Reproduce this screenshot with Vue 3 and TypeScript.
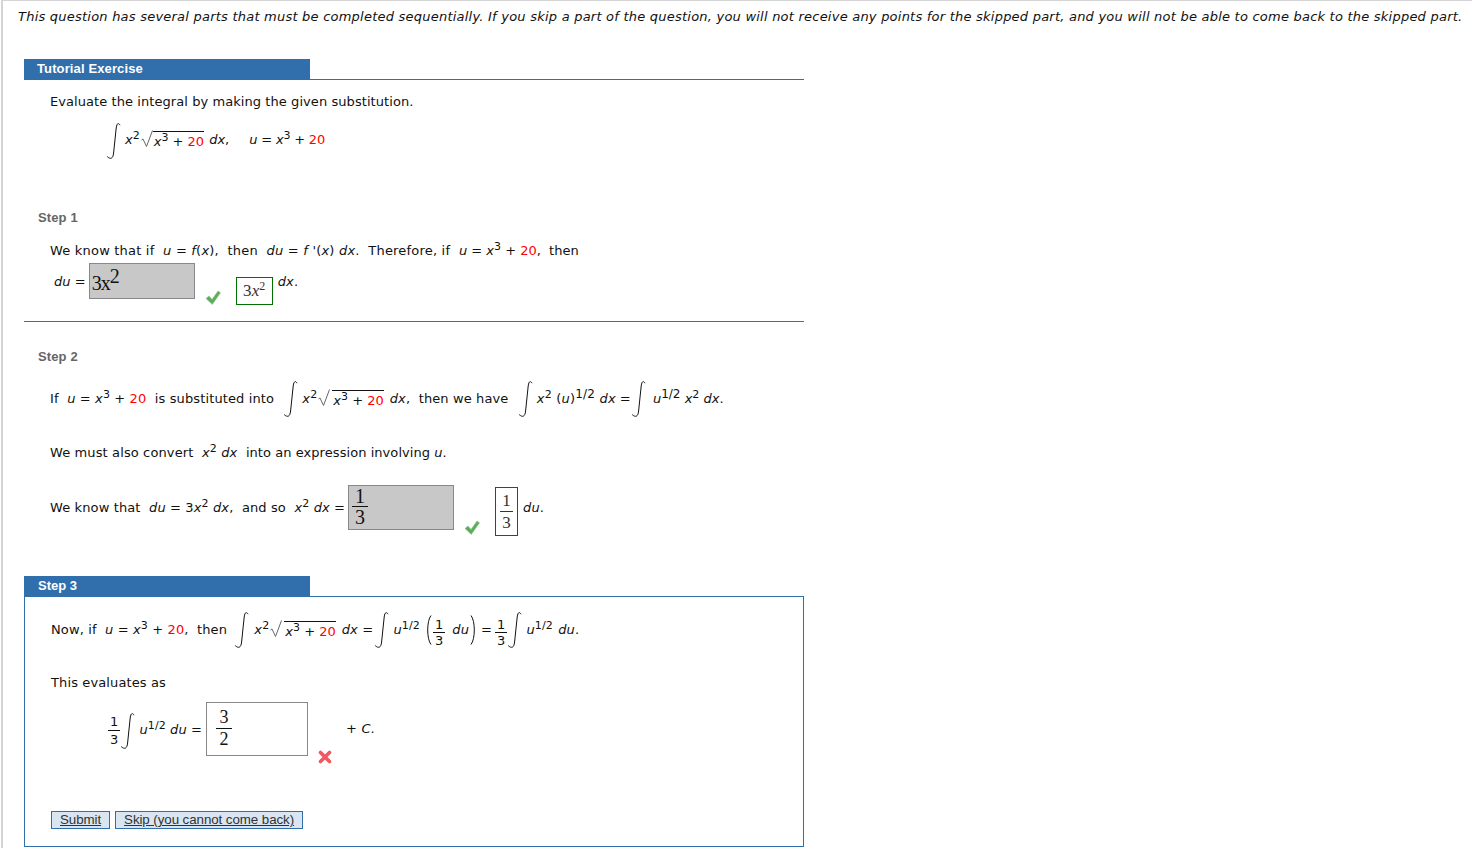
<script setup lang="ts">
const note =
  'This question has several parts that must be completed sequentially. If you skip a part of the question, you will not receive any points for the skipped part, and you will not be able to come back to the skipped part.'
</script>

<template>
  <div class="page">
    <p class="note">{{ note }}</p>

    <section class="tutorial">
      <div class="bar-row"><h2 class="bar">Tutorial Exercise</h2></div>
      <p class="line intro">Evaluate the integral by making the given substitution.</p>
      <div class="line math problem">
        <svg class="int" viewBox="0 0 15 38"><path d="M14 3.2C12.6 .6 10.8 1 10.2 6L7.6 31C7 36.8 4.6 37.6 1.2 34.6" /></svg>
        <i class="v first">x</i><sup>2</sup><svg class="rad" viewBox="0 0 12 17"><path d="M.5 10L2 9 5.5 16.5 11.5 .5" /></svg><span class="radicand"><i class="v">x</i><sup>3</sup> + <b class="red">20</b></span>
        <i class="v gap-s">dx</i>,
        <span class="given"><i class="v gap-l">u</i> = <i class="v">x</i><sup>3</sup> + <b class="red">20</b></span>
      </div>

      <h3 class="step s1">Step 1</h3>
      <p class="line know">
        We know that if&nbsp; <i class="v">u</i> = <i class="v">f</i>(<i class="v">x</i>),&nbsp; then&nbsp;
        <i class="v">du</i> = <i class="v">f</i> '(<i class="v">x</i>) <i class="v">dx</i>.&nbsp; Therefore, if&nbsp;
        <span class="tail"><i class="v">u</i> = <i class="v">x</i><sup>3</sup> + <b class="red">20</b>,&nbsp; then</span>
      </p>
      <div class="answer-row first-answer">
        <i class="v du">du</i><span class="eq">=</span>
        <div class="field filled wide-a"><span class="typed">3x<sup class="big-sup">2</sup></span></div>
        <svg class="mark check" viewBox="0 0 16 15"><path d="M1 8.5L4 6l3 3.4L13 1l2.5 1.8L7.3 14.4z" /></svg>
        <div class="solution s-a"><span class="tex">3<i>x</i><sup>2</sup></span></div>
        <span class="after-a"><i class="v">dx</i>.</span>
      </div>
      <hr class="rule" />

      <h3 class="step s2">Step 2</h3>
      <div class="line math sub-line">
        If&nbsp; <i class="v">u</i> = <i class="v">x</i><sup>3</sup> + <b class="red">20</b>&nbsp; is substituted into
        <svg class="int sp-int" viewBox="0 0 15 38"><path d="M14 3.2C12.6 .6 10.8 1 10.2 6L7.6 31C7 36.8 4.6 37.6 1.2 34.6" /></svg>
        <i class="v first">x</i><sup>2</sup><svg class="rad" viewBox="0 0 12 17"><path d="M.5 10L2 9 5.5 16.5 11.5 .5" /></svg><span class="radicand wide"><i class="v">x</i><sup>3</sup> + <b class="red">20</b></span>
        <i class="v gap-s">dx</i>,&nbsp; then we have
        <svg class="int sp-int" viewBox="0 0 15 38"><path d="M14 3.2C12.6 .6 10.8 1 10.2 6L7.6 31C7 36.8 4.6 37.6 1.2 34.6" /></svg>
        <span class="mid"><i class="v first">x</i><sup>2</sup> (<i class="v">u</i>)<sup class="large">1/2</sup> <i class="v">dx</i><span class="tight-eq">=</span></span>
        <svg class="int" viewBox="0 0 15 38"><path d="M14 3.2C12.6 .6 10.8 1 10.2 6L7.6 31C7 36.8 4.6 37.6 1.2 34.6" /></svg>
        <span class="tail"><i class="v after-int">u</i><sup class="large">1/2</sup> <i class="v">x</i><sup>2</sup> <i class="v">dx</i>.</span>
      </div>
      <p class="line convert">
        We must also convert&nbsp; <i class="v">x</i><sup>2</sup> <i class="v">dx</i>&nbsp; <span class="snug">into an expression involving <i class="v">u</i>.</span>
      </p>
      <div class="answer-row second-answer">
        <span class="lead">We know that&nbsp; <i class="v">du</i> = 3<i class="v">x</i><sup>2</sup> <i class="v">dx</i>,&nbsp; and so&nbsp; <i class="v">x</i><sup>2</sup> <i class="v">dx</i> =</span>
        <div class="field filled wide-b">
          <span class="frac-lg"><span>1</span><span>3</span></span>
        </div>
        <svg class="mark check" viewBox="0 0 16 15"><path d="M1 8.5L4 6l3 3.4L13 1l2.5 1.8L7.3 14.4z" /></svg>
        <div class="solution s-b"><span class="frac-tex"><span>1</span><span>3</span></span></div>
        <span class="after-b"><i class="v">du</i>.</span>
      </div>
    </section>

    <section class="active">
      <div class="bar-row"><h2 class="bar step-bar">Step 3</h2></div>
      <div class="panel">
        <div class="line math now">
          Now, if&nbsp; <i class="v">u</i> = <i class="v">x</i><sup>3</sup> + <b class="red">20</b>,&nbsp; then
          <svg class="int now-int" viewBox="0 0 15 38"><path d="M14 3.2C12.6 .6 10.8 1 10.2 6L7.6 31C7 36.8 4.6 37.6 1.2 34.6" /></svg>
          <i class="v now-first">x</i><sup>2</sup><svg class="rad" viewBox="0 0 12 17"><path d="M.5 10L2 9 5.5 16.5 11.5 .5" /></svg><span class="radicand wide"><i class="v">x</i><sup>3</sup> + <b class="red">20</b></span>
          <i class="v gap-s">dx</i> =
          <svg class="int pull" viewBox="0 0 15 38"><path d="M14 3.2C12.6 .6 10.8 1 10.2 6L7.6 31C7 36.8 4.6 37.6 1.2 34.6" /></svg>
          <i class="v first">u</i><sup>1/2</sup>
          <svg class="paren open-paren" viewBox="0 0 7 30"><path d="M6 .5C1.6 6 1.6 24 6 29.5" /></svg><span class="frac"><span>1</span><span>3</span></span>
          <i class="v du-inline">du</i><svg class="paren" viewBox="0 0 7 30"><path d="M1 .5C5.4 6 5.4 24 1 29.5" /></svg><span class="eq-near">=</span>
          <span class="frac near"><span>1</span><span>3</span></span><svg class="int tight" viewBox="0 0 15 38"><path d="M14 3.2C12.6 .6 10.8 1 10.2 6L7.6 31C7 36.8 4.6 37.6 1.2 34.6" /></svg>
          <i class="v first">u</i><sup>1/2</sup> <i class="v last-du">du</i>.
        </div>
        <p class="line evaluates">This evaluates as</p>
        <div class="answer-row third-answer">
          <span class="frac"><span>1</span><span>3</span></span><svg class="int tight" viewBox="0 0 15 38"><path d="M14 3.2C12.6 .6 10.8 1 10.2 6L7.6 31C7 36.8 4.6 37.6 1.2 34.6" /></svg>
          <span class="integrand"><i class="v">u</i><sup>1/2</sup> <i class="v">du</i> =</span>
          <div class="field open"><span class="frac-lg open-frac"><span>3</span><span>2</span></span></div>
          <svg class="mark cross" viewBox="0 0 14 14"><path d="M2.5 2.5l9 9M11.5 2.5l-9 9" /></svg>
          <span class="plus-c">+ <i class="v">C</i>.</span>
        </div>
        <div class="actions">
          <button class="btn" type="button">Submit</button>
          <button class="btn" type="button">Skip (you cannot come back)</button>
        </div>
      </div>
    </section>
  </div>
</template>

<style>
html,
body {
  margin: 0;
  background: #fff;
}
</style>

<style scoped>
.page {
  box-sizing: border-box;
  height: 848px;
  margin-left: 1px;
  border-top: 1px solid #d4d4d4;
  border-left: 2px solid #d4d4d4;
  padding-left: 21px;
  overflow: hidden;
  color: #111;
  font: 13px/16px "DejaVu Sans", Verdana, sans-serif;
  letter-spacing: 0.12px;
}
p,
h2,
h3 {
  margin: 0;
}
.note {
  width: 1460px;
  margin-top: 8px;
  margin-left: -6px;
  font-style: italic;
  letter-spacing: 0.226px;
  white-space: nowrap;
}
.tutorial {
  width: 780px;
  margin-top: 34px;
}
.bar-row {
  height: 20px;
  border-bottom: 1px solid #306fac;
}
.bar {
  box-sizing: border-box;
  width: 286px;
  height: 20px;
  padding-left: 13px;
  background: #306fac;
  color: #fff;
  font: bold 13px/19px "Liberation Sans", Arial, sans-serif;
  letter-spacing: 0.12px;
}
.step-bar {
  padding-left: 14px;
  letter-spacing: 0;
}
.line {
  margin-left: 26px;
  white-space: nowrap;
}
.math {
  height: 38px;
  line-height: 38px;
}
.intro {
  margin-top: 14px;
  letter-spacing: 0.07px;
}
.problem {
  margin-top: 12px;
  margin-left: 82px;
  line-height: 33px;
  letter-spacing: 0;
}
.problem .int {
  vertical-align: -16px;
}
.problem .radicand {
  margin-right: -1px;
}
.given {
  letter-spacing: -0.2px;
}
.v {
  font-style: italic;
}
.first {
  margin-left: 4px;
}
.after-int {
  margin-left: 7px;
}
.now-first {
  margin-left: 5px;
}
sup {
  font-size: 11px;
  line-height: 0;
  vertical-align: 5px;
}
sup.large {
  font-size: 12px;
}
.red {
  color: #f00;
  font-weight: normal;
}
.int {
  width: 15px;
  height: 38px;
  vertical-align: -15px;
  fill: none;
  stroke: #111;
  stroke-width: 1;
}
.sp-int {
  margin-left: 5px;
}
.now-int {
  margin-left: 3px;
}
.pull {
  margin-left: -3px;
}
.tight {
  margin-left: 0;
}
.tail {
  letter-spacing: 0;
}
.mid {
  letter-spacing: 0.2px;
}
.snug {
  letter-spacing: 0.06px;
}
.tight-eq {
  margin-left: 4px;
}
.rad {
  width: 12px;
  height: 17px;
  margin-left: 1px;
  vertical-align: -3px;
  fill: none;
  stroke: #666;
  stroke-width: 1;
}
.radicand {
  display: inline-block;
  height: 16px;
  padding-left: 1px;
  border-top: 1px solid #111;
  line-height: 20px;
  letter-spacing: 0;
  vertical-align: -2px;
}
.radicand.wide {
  margin-left: 2px;
}
.gap-s {
  margin-left: 6px;
}
.gap-l {
  margin-left: 16px;
}
.step {
  color: #666;
  font: bold 13px/16px "Liberation Sans", Arial, sans-serif;
}
.s1 {
  margin-top: 50px;
  margin-left: 14px;
}
.know {
  margin-top: 17px;
  letter-spacing: 0.2px;
}
.answer-row {
  display: flex;
  white-space: pre;
}
.first-answer {
  height: 44px;
  margin-top: 4px;
  margin-left: 30px;
}
.du {
  margin-top: 11px;
}
.eq {
  margin-top: 11px;
  margin-left: 4px;
  margin-right: 3px;
}
.field {
  box-sizing: border-box;
  flex: none;
  border: 1px solid #888;
}
.filled {
  background: #c8c8c8;
}
.wide-a {
  width: 106px;
  height: 36px;
  padding-left: 2px;
}
.typed {
  font: 20px/38px "Liberation Serif", serif;
  letter-spacing: -1px;
}
.big-sup {
  font-size: 20px;
  vertical-align: 7px;
}
.mark {
  flex: none;
  width: 16px;
  height: 15px;
}
.check {
  margin-top: 27px;
  margin-left: 10px;
  fill: #5bad5b;
  stroke: #8cc68c;
  stroke-width: 0.6;
}
.solution {
  box-sizing: border-box;
  flex: none;
  display: flex;
  align-items: center;
  justify-content: center;
  border: 1px solid #007000;
  color: #333;
  font-family: "Liberation Serif", serif;
}
.s-a {
  width: 37px;
  height: 28px;
  margin-top: 14px;
  margin-left: 15px;
  font-size: 17px;
}
.tex sup {
  font-size: 12px;
  vertical-align: 6px;
}
.after-a {
  margin-top: 11px;
  margin-left: 5px;
}
.rule {
  height: 1px;
  margin: 14px 0 0;
  border: 0;
  background: #666;
}
.s2 {
  margin-top: 27px;
  margin-left: 14px;
}
.sub-line {
  margin-top: 15px;
}
.convert {
  margin-top: 27px;
}
.second-answer {
  height: 52px;
  margin-top: 24px;
  margin-left: 26px;
}
.lead {
  margin-top: 15px;
  margin-right: 3px;
}
.wide-b {
  width: 106px;
  height: 45px;
  padding-left: 3px;
}
.frac-lg {
  display: inline-flex;
  flex-direction: column;
  align-items: center;
  font: 20px/20px "Liberation Serif", serif;
}
.frac-lg span:first-child {
  border-bottom: 1px solid #111;
  padding: 0 3px;
}
.second-answer .check {
  margin-top: 35px;
  margin-left: 10px;
}
.s-b {
  width: 23px;
  height: 49px;
  margin-top: 2px;
  margin-left: 15px;
}
.frac-tex {
  display: inline-flex;
  flex-direction: column;
  align-items: center;
  color: #333;
  font-size: 17px;
  line-height: 21px;
}
.frac-tex span:first-child {
  border-bottom: 1px solid #333;
  padding: 0 2px;
}
.after-b {
  margin-top: 15px;
  margin-left: 5px;
}
.active {
  width: 780px;
  margin-top: 39px;
}
.panel {
  box-sizing: border-box;
  height: 250px;
  border: solid #306fac;
  border-width: 0 1px 1px;
  padding-top: 14px;
}
.frac {
  display: inline-flex;
  flex-direction: column;
  align-items: center;
  vertical-align: 5px;
  font-size: 13px;
  line-height: 15px;
}
.frac span:first-child {
  border-bottom: 1px solid #111;
  padding: 0 2px;
}
.paren {
  width: 7px;
  height: 30px;
  margin: 0 1px;
  vertical-align: -11px;
  fill: none;
  stroke: #111;
  stroke-width: 1;
}
.open-paren {
  margin-left: 5px;
}
.du-inline {
  margin-left: 7px;
}
.eq-near {
  margin-left: 3px;
  margin-right: 3px;
}
.near {
  margin-left: 0;
}
.last-du {
  margin-left: 1px;
}
.evaluates {
  margin-top: 26px;
}
.third-answer {
  height: 60px;
  margin-top: 11px;
  margin-left: 83px;
  align-items: flex-start;
}
.third-answer .frac {
  margin-top: 11px;
  line-height: 17px;
}
.third-answer .int {
  margin-top: 10px;
}
.integrand {
  margin-top: 20px;
  margin-left: 4px;
  margin-right: 4px;
}
.open {
  width: 102px;
  height: 54px;
  padding-left: 9px;
  padding-top: 4px;
}
.open-frac {
  font-size: 18px;
  line-height: 21px;
}
.open-frac span:first-child {
  padding: 0 3.5px;
}
.cross {
  width: 14px;
  height: 14px;
  margin-top: 48px;
  margin-left: 10px;
  fill: none;
  stroke: #f2585f;
  stroke-width: 3.6;
  stroke-linecap: round;
}
.plus-c {
  margin-top: 19px;
  margin-left: 14px;
}
.actions {
  display: flex;
  gap: 5px;
  margin-top: 49px;
  margin-left: 26px;
}
.btn {
  height: 18px;
  padding: 0 8px;
  border: 1px solid #306fac;
  background: #d9e5f0;
  color: #333;
  font: 13.33px/16px "Liberation Sans", Arial, sans-serif;
  letter-spacing: -0.07px;
  text-decoration: underline;
}
</style>
